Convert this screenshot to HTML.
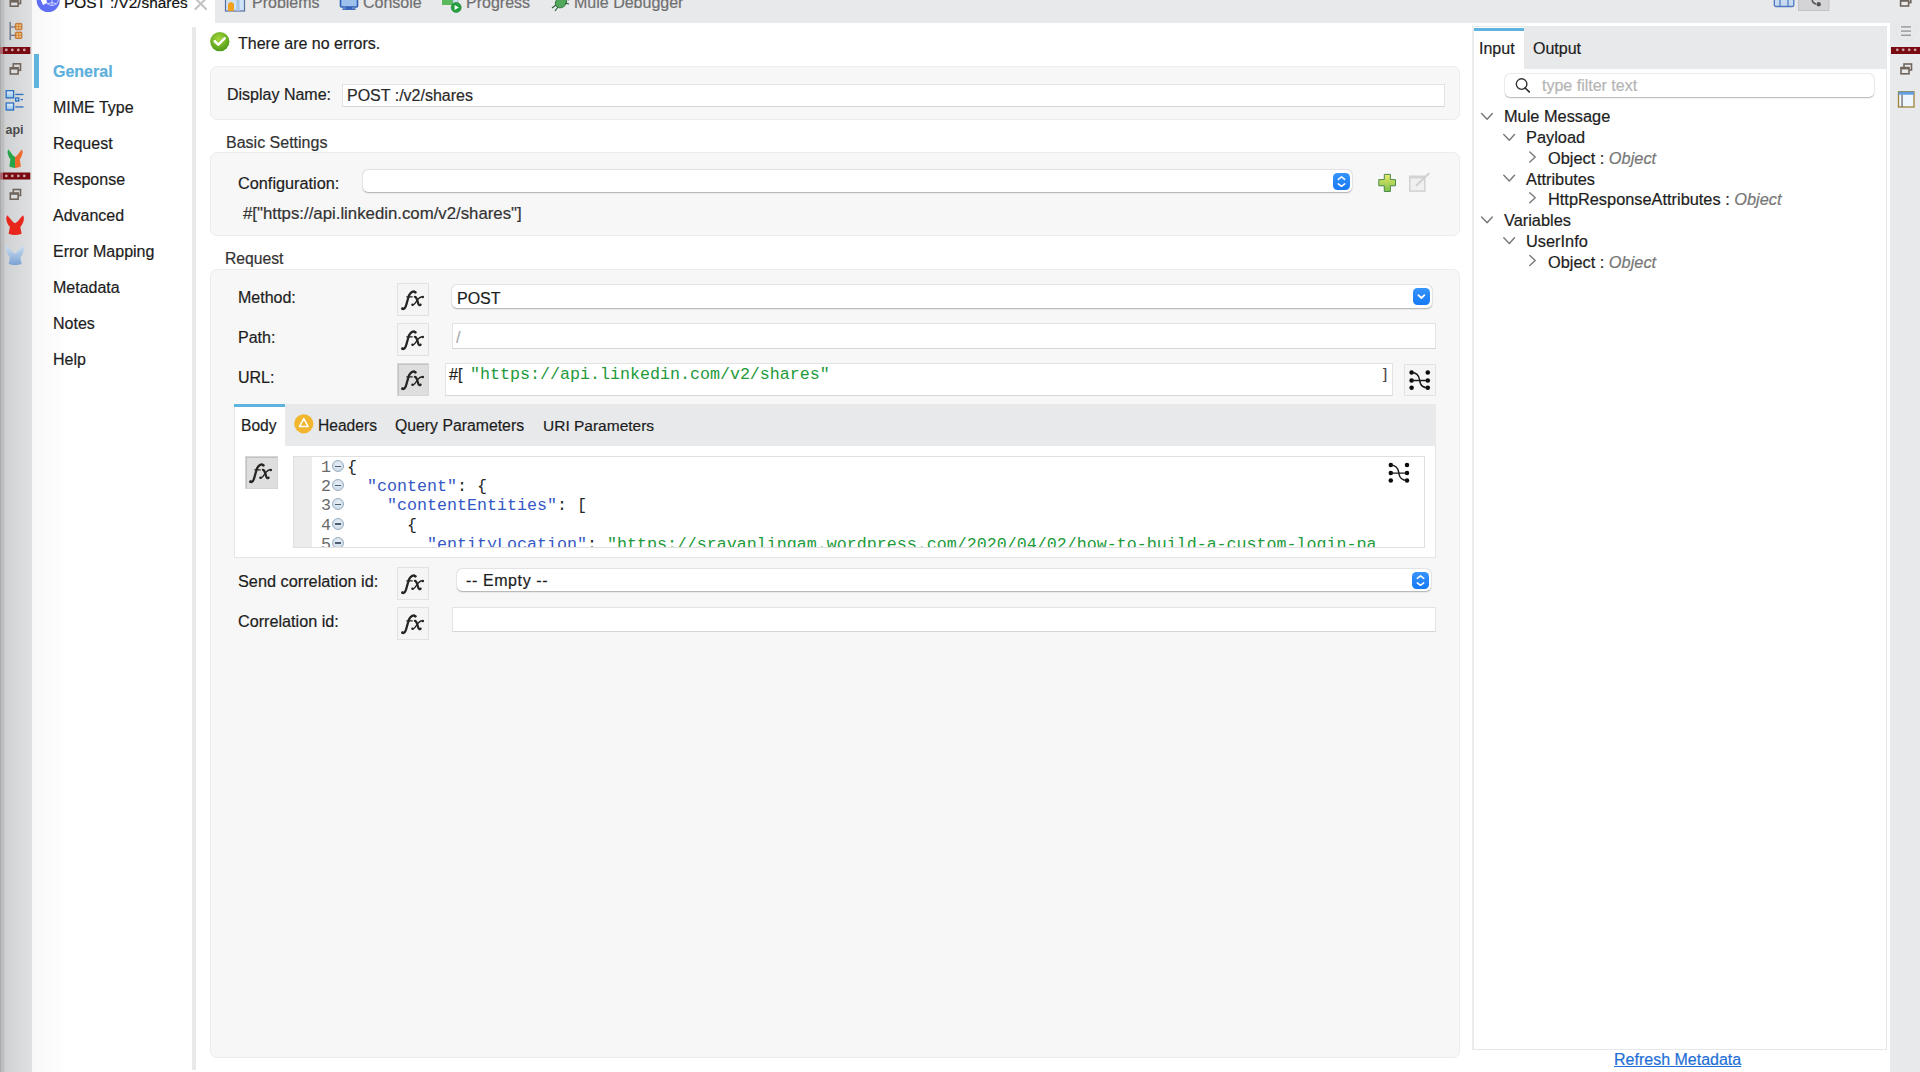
<!DOCTYPE html>
<html><head><meta charset="utf-8">
<style>
*{box-sizing:border-box}
html,body{margin:0;padding:0;width:1920px;height:1072px;overflow:hidden;background:#fff;font-family:"Liberation Sans",sans-serif;color:#1d1d1d}
.a{position:absolute}
.t{position:absolute;white-space:pre;font-size:16px;line-height:20px;-webkit-text-stroke:0.2px currentColor}
.m{font-family:"Liberation Mono",monospace;font-size:16.67px;-webkit-text-stroke:0}
.panel{position:absolute;background:#f7f7f7;border:1px solid #ececec;border-radius:7px}
.fx{position:absolute;width:32px;height:32.5px;border:1px solid #e2e2e2;background:#f5f5f5}
.fx.p{background:#dedede;border-color:#d6d6d6;box-shadow:inset 1px 1px 0 #c2c2c2}
.inp{position:absolute;background:#fff;border:1px solid #e3e3e3;border-bottom-color:#d6d6d6}
.sel{position:absolute;background:#fff;border-radius:5px;box-shadow:0 0.5px 1.5px rgba(0,0,0,0.28),0 0 0 0.5px rgba(0,0,0,0.06)}
.fold{display:inline-block;width:12px;height:12px;border-radius:50%;background:radial-gradient(circle at 50% 40%,#e8f0f7,#c5d5e3);border:1px solid #9aaec2;vertical-align:0px;margin:0 3px 0 1px;position:relative}
.fold:after{content:"";position:absolute;left:2px;top:4.5px;width:6px;height:1.4px;background:#4d5d72}
.step{position:absolute;width:17px;height:17px;border-radius:4.5px;background:linear-gradient(#3794fb,#1679f5)}
.step svg{position:absolute;left:0;top:0}
</style></head><body>
<svg width="0" height="0" style="position:absolute"><defs>
<g id="fxg" fill="#262422" stroke="#262422" stroke-linecap="round">
 <path d="M20.2 9.3 C17 9.4 15.2 12 14.2 16 L12.2 23 C11.4 26 10.2 27.4 8.6 26.9" fill="none" stroke-width="2.3"/>
 <circle cx="21.3" cy="10.3" r="1.35" stroke="none"/>
 <circle cx="8.6" cy="26.7" r="1.4" stroke="none"/>
 <path d="M12.9 14.9 H18.2" stroke-width="1.4"/>
 <path d="M20.9 14.8 C22.3 14.9 22.7 16.5 23.3 18.4 L24.2 21.4 C24.8 23.2 25.6 23.6 26.6 22.6" fill="none" stroke-width="2.2"/>
 <path d="M28.6 14.8 C26.5 14.6 24.6 16.4 22.8 18.8 L21 21.4 C20.2 22.6 19.4 23 18.3 22.9" fill="none" stroke-width="1.35"/>
 <circle cx="28.8" cy="15" r="1.25" stroke="none"/>
 <circle cx="18.6" cy="22.7" r="1.3" stroke="none"/>
</g>
<g id="mapg" fill="#0a0a0a">
 <circle cx="0" cy="0" r="2.25"/><circle cx="0" cy="8" r="2.25"/><circle cx="0" cy="15.3" r="2.25"/>
 <circle cx="16.2" cy="0" r="2.25"/><circle cx="16.2" cy="8" r="2.25"/><circle cx="16.2" cy="15.3" r="2.25"/>
 <path d="M0 0 C5 0.2 7.2 2.5 7.9 7 L8.2 9 C9 13 11 15.3 16.2 15.3 M0 8 H16.2" fill="none" stroke="#1a1a1a" stroke-width="1.45"/>
</g>
</defs></svg>

<!-- left strip -->
<div class="a" style="left:0;top:0;width:32px;height:1072px;background:linear-gradient(90deg,#a8a8a9 0,#a9a9aa 1px,#bcbdbf 1.5px,#bdbec0 3.5px,#c9cacc 4.5px,#d0d1d3 6px,#d5d6d8 14px,#dcdddf 26px,#dfe0e2 32px)"></div>

<!-- top tab bar -->
<div class="a" style="left:215px;top:0;width:1705px;height:23px;background:#e8e9eb"></div>
<!-- left nav bg gradient -->
<div class="a" style="left:32px;top:0;width:36px;height:1072px;background:linear-gradient(90deg,#f8f8f9,#fff)"></div>

<!-- right strip -->
<div class="a" style="left:1890px;top:23px;width:30px;height:1049px;background:#e8e9eb"></div>

<!-- separator -->
<div class="a" style="left:192px;top:27px;width:4px;height:1043px;background:#e8e9eb"></div>

<!-- active nav indicator -->
<div class="a" style="left:34px;top:54px;width:5px;height:34px;background:#60b3dd"></div>

<!-- left nav -->
<div class="t" style="left:53px;top:62px;color:#5cb0dc;font-weight:bold;font-size:16px">General</div>
<div class="t" style="left:53px;top:98px">MIME Type</div>
<div class="t" style="left:53px;top:134px">Request</div>
<div class="t" style="left:53px;top:170px">Response</div>
<div class="t" style="left:53px;top:206px">Advanced</div>
<div class="t" style="left:53px;top:242px">Error Mapping</div>
<div class="t" style="left:53px;top:278px">Metadata</div>
<div class="t" style="left:53px;top:314px">Notes</div>
<div class="t" style="left:53px;top:350px">Help</div>


<!-- left strip icons -->
<svg class="a" style="left:0;top:0" width="32" height="280" viewBox="0 0 32 280">
 <g fill="none" stroke="#6f655c" stroke-width="1.6">
  <rect x="13.3" y="-3" width="7.2" height="6.5"/><rect x="10.3" y="0.8" width="7.8" height="5.4" fill="#dcdde0"/>
  <rect x="13.3" y="63.8" width="7.2" height="6.5"/><rect x="10.3" y="67.8" width="7.8" height="6.2" fill="#dcdde0"/>
  <rect x="13.3" y="189.5" width="7.2" height="6" /><rect x="10.3" y="193" width="7.8" height="6.2" fill="#dcdde0"/>
 </g>
 <g fill="#6f655c"><rect x="10.3" y="0.8" width="7.8" height="1.8"/><rect x="10.3" y="67.8" width="7.8" height="1.8"/><rect x="10.3" y="193" width="7.8" height="1.8"/></g>
 <!-- hierarchy -->
 <g fill="#6b7385"><rect x="9.5" y="22" width="1.4" height="18"/><rect x="10.9" y="26.3" width="4.3" height="1.3"/><rect x="10.9" y="34.7" width="4.3" height="1.3"/></g>
 <g fill="#d68a3a" stroke="#b8672a" stroke-width="0.8"><rect x="15.4" y="23.4" width="6.5" height="6.4" rx="0.8"/><rect x="15.4" y="32.1" width="6.5" height="6.4" rx="0.8"/></g>
 <g fill="#f0c890"><rect x="16.5" y="24.5" width="1.6" height="1.6"/><rect x="19.3" y="24.5" width="1.6" height="1.6"/><rect x="16.5" y="27.2" width="1.6" height="1.6"/><rect x="19.3" y="27.2" width="1.6" height="1.6"/>
 <rect x="16.5" y="33.2" width="1.6" height="1.6"/><rect x="19.3" y="33.2" width="1.6" height="1.6"/><rect x="16.5" y="35.9" width="1.6" height="1.6"/><rect x="19.3" y="35.9" width="1.6" height="1.6"/></g>
 <!-- red bars -->
 <rect x="0" y="47" width="3" height="7" fill="#a86a70"/><rect x="3" y="47" width="27.3" height="7" fill="#7a0a12"/>
 <g fill="#c9a3a3"><circle cx="6.3" cy="49.9" r="1.4"/><circle cx="12.3" cy="49.9" r="1.4"/><circle cx="18.3" cy="49.9" r="1.4"/><circle cx="24.3" cy="49.9" r="1.4"/></g>
 <rect x="0" y="172.5" width="3" height="7" fill="#a86a70"/><rect x="3" y="172.5" width="27.3" height="7" fill="#7a0a12"/>
 <g fill="#c9a3a3"><circle cx="6.3" cy="175.9" r="1.4"/><circle cx="12.3" cy="175.9" r="1.4"/><circle cx="18.3" cy="175.9" r="1.4"/><circle cx="24.3" cy="175.9" r="1.4"/></g>
 <!-- blue layout icon -->
 <defs><linearGradient id="bl" x1="0" y1="0" x2="0" y2="1"><stop offset="0" stop-color="#e8f2fb"/><stop offset="1" stop-color="#8fbde8"/></linearGradient>
 <linearGradient id="gm" x1="0" y1="0" x2="1" y2="0"><stop offset="0.5" stop-color="#27a548"/><stop offset="0.5" stop-color="#ee6a2a"/></linearGradient>
 <linearGradient id="bm" x1="0" y1="0" x2="0" y2="1"><stop offset="0" stop-color="#cddff2"/><stop offset="1" stop-color="#79a1d2"/></linearGradient></defs>
 <g stroke="#2a6fc0" stroke-width="1.3" fill="url(#bl)"><rect x="6.2" y="90.7" width="7.4" height="7.2"/><rect x="6.2" y="103" width="7.4" height="7"/><rect x="15.6" y="98" width="3.2" height="3"/></g>
 <g fill="#2a6fc0"><rect x="15.3" y="93.8" width="8.2" height="1.3"/><rect x="15.3" y="106.3" width="8.2" height="1.3"/><rect x="20.6" y="99" width="2.4" height="1.2"/></g>
 <text x="5.5" y="134" font-family="Liberation Sans" font-size="12.5" font-weight="bold" fill="#4c4c4c">api</text>
 <!-- mule icons -->
 <path d="M8.40 149.60 C6.80 151.50 7.50 154.92 10.40 159.60 L9.30 166.60 Q15.10 169.20 20.90 166.60 L19.80 159.60 C22.70 154.92 23.40 151.50 21.80 149.60 C19.50 152.00 17.50 156.00 15.10 157.00 C12.70 156.00 10.70 152.00 8.40 149.60 Z" fill="url(#gm)"/>
 <path d="M7.20 215.20 C5.60 217.60 5.90 221.92 9.90 227.10 L8.60 233.70 Q15.10 236.10 21.60 233.70 L20.30 227.10 C24.30 221.92 24.60 217.60 23.00 215.20 C20.70 217.60 17.50 222.20 15.10 223.20 C12.70 222.20 9.50 217.60 7.20 215.20 Z" fill="#e8261c"/>
 <path d="M7.20 245.60 C5.60 248.00 5.90 252.32 9.90 257.50 L8.60 264.10 Q15.10 266.20 21.60 264.10 L20.30 257.50 C24.30 252.32 24.60 248.00 23.00 245.60 C20.70 248.00 17.50 252.60 15.10 253.60 C12.70 252.60 9.50 248.00 7.20 245.60 Z" fill="url(#bm)"/>
</svg>

<!-- top tab icons -->
<svg class="a" style="left:32px;top:0" width="700" height="23" viewBox="32 0 700 23">
 <circle cx="48.2" cy="0.6" r="11.5" fill="#5f6ff3"/>
 <g stroke="#c8d0ff" stroke-width="1" fill="none"><circle cx="52" cy="-1" r="6.5"/><path d="M45.5 -1 H58.5 M52 -7.5 V5.5 M47 4 Q52 1 57 4"/></g>
 <path d="M40 -2 L46 -2 L47 3 L43 5 Z" fill="#fff"/>
 <g stroke="#c4c4c4" stroke-width="2.2" stroke-linecap="round"><path d="M195.5 -1.5 L206 9 M206 -1.5 L195.5 9"/></g>
 <!-- problems -->
 <rect x="225.5" y="-2" width="19" height="13" fill="#cfe3f6" stroke="#5770a0" stroke-width="1.2"/>
 <path d="M228 11 V4 Q231 0 234 4 V11 Z" fill="#f2a020"/>
 <rect x="236.5" y="-2" width="3" height="13" fill="#a8c4e6"/>
 <!-- console -->
 <rect x="340.5" y="-3" width="17" height="10" rx="1" fill="#9ec0ec" stroke="#2f5fb8" stroke-width="1.6"/>
 <rect x="346" y="7" width="6" height="1.8" fill="#2f5fb8"/><rect x="342.5" y="8.3" width="13" height="1.6" fill="#2f5fb8"/>
 <!-- progress -->
 <rect x="442" y="-3" width="11" height="8" fill="#5cb85c"/><rect x="453" y="-3" width="5" height="8" fill="#cfe2f3" stroke="#8aa" stroke-width="0.6"/>
 <circle cx="456.2" cy="7.5" r="5" fill="#25a040" stroke="#1d7a30" stroke-width="0.6"/><path d="M454.6 5 L458.8 7.5 L454.6 10 Z" fill="#fff"/>
 <!-- debugger bug -->
 <ellipse cx="561" cy="2.5" rx="6" ry="5" fill="#52a85a" stroke="#2e6e3a" stroke-width="0.8" transform="rotate(-35 561 2.5)"/>
 <path d="M552 8 L556 5 M555 11 L558 7 M566 -1 L569 0 M565 3 L569 4" stroke="#2e5f3a" stroke-width="1.2"/>
</svg>

<!-- check icon -->
<svg class="a" style="left:208px;top:30px" width="24" height="24" viewBox="0 0 24 24">
 <defs><radialGradient id="gc" cx="0.45" cy="0.35" r="0.65"><stop offset="0" stop-color="#a6d83a"/><stop offset="1" stop-color="#4f9a1a"/></radialGradient></defs>
 <circle cx="11.8" cy="11.6" r="9.6" fill="url(#gc)"/>
 <path d="M6.8 11.2 L10.3 14.6 L16.6 8.3" fill="none" stroke="#fff" stroke-width="2.6" stroke-linecap="round" stroke-linejoin="round"/>
</svg>

<!-- top right icons -->
<svg class="a" style="left:1760px;top:0" width="160" height="23" viewBox="1760 0 160 23">
 <rect x="1774.3" y="-3" width="19.5" height="9.5" rx="1.5" fill="#c7daf0" stroke="#4d78c0" stroke-width="1.3"/>
 <path d="M1780 -3 V6.5 M1788 -3 V6.5" stroke="#4d78c0" stroke-width="1.2"/>
 <rect x="1798.5" y="-2" width="30.5" height="12.5" fill="#d4d4d6" stroke="#bcbcbe" stroke-width="0.8"/>
 <path d="M1812 -2 Q1812 3.5 1816 4" fill="none" stroke="#555" stroke-width="1.5"/><circle cx="1818.7" cy="4.2" r="2.2" fill="#555"/>
 <g fill="none" stroke="#6f655c" stroke-width="1.6"><rect x="1903.3" y="-3" width="7.5" height="5.6"/><rect x="1900.6" y="0" width="8" height="6" fill="#e8e9eb"/></g>
 <rect x="1900.6" y="0" width="8" height="1.8" fill="#6f655c"/>
</svg>

<!-- right strip icons -->
<svg class="a" style="left:1890px;top:23px" width="30" height="90" viewBox="1890 23 30 90">
 <circle cx="1906" cy="31" r="10" fill="none" stroke="#e2e3e5" stroke-width="0.8"/>
 <g fill="#8a8a8a"><rect x="1901" y="26.3" width="10" height="1.2"/><rect x="1901" y="30.5" width="10" height="1.2"/><rect x="1901" y="34.6" width="10" height="1.2"/></g>
 <rect x="1891" y="47" width="29" height="7" fill="#7a0a12"/>
 <g fill="#c9a3a3"><circle cx="1897.3" cy="49.8" r="1.4"/><circle cx="1903.2" cy="49.8" r="1.4"/><circle cx="1909.2" cy="49.8" r="1.4"/><circle cx="1915.1" cy="49.8" r="1.4"/></g>
 <g fill="none" stroke="#6f655c" stroke-width="1.6"><rect x="1904" y="64" width="7.5" height="6"/><rect x="1901" y="67.6" width="8" height="6.2" fill="#e8e9eb"/></g>
 <rect x="1901" y="67.6" width="8" height="1.8" fill="#6f655c"/>
 <rect x="1898.5" y="91.7" width="15.5" height="15.3" fill="#eef6fd" stroke="#a0823a" stroke-width="1.3"/>
 <rect x="1898.5" y="91.7" width="15.5" height="3" fill="#5d9de0"/>
 <rect x="1901.4" y="94.7" width="1.3" height="12.3" fill="#6c6c6c"/>
</svg>

<!-- top tabs text -->
<div class="t" style="left:64px;top:-7px;color:#111;font-size:15.4px">POST :/V2/shares</div>
<div class="t" style="left:252px;top:-7px;color:#707070">Problems</div>
<div class="t" style="left:363px;top:-7px;color:#707070">Console</div>
<div class="t" style="left:466px;top:-7px;color:#707070">Progress</div>
<div class="t" style="left:574px;top:-7px;color:#707070">Mule Debugger</div>

<!-- status -->
<div class="t" style="left:238px;top:34px">There are no errors.</div>

<!-- panel 1 -->
<div class="panel" style="left:210px;top:66px;width:1250px;height:54px"></div>
<div class="t" style="left:227px;top:85px;color:#222">Display Name:</div>
<div class="inp" style="left:342px;top:84px;width:1103px;height:23px"></div>
<div class="t" style="left:347px;top:86px;color:#2a2a2a">POST :/v2/shares</div>

<div class="t" style="left:226px;top:133px;color:#333">Basic Settings</div>
<div class="panel" style="left:210px;top:152px;width:1250px;height:84px"></div>
<div class="t" style="left:238px;top:173px;font-size:16.3px">Configuration:</div>
<div class="sel" style="left:363px;top:170px;width:989px;height:22px"></div>
<div class="step" style="left:1333px;top:172.5px"><svg width="17" height="17" viewBox="0 0 17 17"><path d="M5.3 6.3 L8.5 3.9 L11.7 6.3 M5.3 10.9 L8.5 13.3 L11.7 10.9" fill="none" stroke="#fff" stroke-width="1.6" stroke-linecap="round" stroke-linejoin="round"/></svg></div>
<svg class="a" style="left:1376px;top:172px" width="56" height="22" viewBox="1376 172 56 22">
 <defs><linearGradient id="pl" x1="0" y1="0" x2="0" y2="1"><stop offset="0" stop-color="#ecea6e"/><stop offset="1" stop-color="#7cc146"/></linearGradient></defs>
 <path d="M1384.3 174.4 H1390.4 V179.6 H1395.5 V185.8 H1390.4 V191.5 H1384.3 V185.8 H1378.8 V179.6 H1384.3 Z" fill="url(#pl)" stroke="#4a8a4a" stroke-width="1"/>
 <rect x="1409.8" y="176.3" width="15" height="14.8" fill="#f0f0f0" stroke="#d3d3d3" stroke-width="1.6"/>
 <rect x="1409.8" y="176.3" width="15" height="2.2" fill="#d3d3d3"/>
 <path d="M1416.5 185.3 L1428.8 173.6" stroke="#d0d0d0" stroke-width="2" stroke-linecap="round"/>
</svg>
<div class="t" style="left:243px;top:204px;color:#333;font-size:16.8px">#["https://api.linkedin.com/v2/shares"]</div>

<div class="t" style="left:225px;top:249px;color:#333;font-size:15.7px">Request</div>
<div class="panel" style="left:210px;top:269px;width:1250px;height:789px"></div>

<div class="t" style="left:238px;top:288px">Method:</div>
<div class="t" style="left:238px;top:328px">Path:</div>
<div class="t" style="left:238px;top:368px">URL:</div>
<div class="fx" style="left:397px;top:283px"><svg width="38" height="37" viewBox="0 0 38 37" style="position:absolute;left:-4px;top:-2.4px"><use href="#fxg"/></svg></div>
<div class="fx" style="left:397px;top:323px"><svg width="38" height="37" viewBox="0 0 38 37" style="position:absolute;left:-4px;top:-2.4px"><use href="#fxg"/></svg></div>
<div class="fx p" style="left:397px;top:363px"><svg width="38" height="37" viewBox="0 0 38 37" style="position:absolute;left:-4px;top:-2.4px"><use href="#fxg"/></svg></div>

<div class="sel" style="left:452px;top:284.5px;width:980px;height:23.5px"></div>
<div class="step" style="left:1413px;top:288px"><svg width="17" height="17" viewBox="0 0 17 17"><path d="M5.4 7.2 L8.4 10 L11.4 7.2" fill="none" stroke="#fff" stroke-width="1.8" stroke-linecap="round" stroke-linejoin="round"/></svg></div>
<div class="t" style="left:457px;top:289px">POST</div>
<div class="inp" style="left:452px;top:323px;width:984px;height:26px"></div>
<div class="t" style="left:456px;top:328px;color:#aaa">/</div>
<div class="inp" style="left:445px;top:363px;width:948px;height:33px"></div>
<div class="t" style="left:449px;top:365px">#[</div>
<div class="t m" style="left:470px;top:365px;color:#229a3a">"https://api.linkedin.com/v2/shares"</div>
<div class="t" style="left:1383px;top:364px;font-size:15px;color:#444">]</div>
<div class="fx" style="left:1404px;top:364px;width:32px;height:32px"><svg width="32" height="32" viewBox="1405 365 32 32" style="position:absolute;left:0;top:0"><use href="#mapg" transform="translate(1411.6 372.5)"/></svg></div>

<!-- tabs -->
<div class="a" style="left:234px;top:404px;width:1202px;height:154px;background:#fff;border:1px solid #e6e6e6;border-top:0"></div>
<div class="a" style="left:285px;top:404px;width:1151px;height:42px;background:#e8e9eb"></div>
<div class="a" style="left:234px;top:404px;width:51px;height:3px;background:#5eb3df"></div>
<div class="t" style="left:241px;top:416px;font-size:15.6px">Body</div>
<svg class="a" style="left:294px;top:414px" width="20" height="20" viewBox="0 0 20 20"><circle cx="9.8" cy="9.8" r="9.6" fill="#f1b52e"/><path d="M9.8 4.6 L14.2 12.6 H5.4 Z" fill="none" stroke="#fff" stroke-width="1.5" stroke-linejoin="round"/></svg>
<div class="t" style="left:318px;top:416px;font-size:15.6px">Headers</div>
<div class="t" style="left:395px;top:416px;font-size:15.8px">Query Parameters</div>
<div class="t" style="left:543px;top:416px;font-size:15.5px">URI Parameters</div>

<div class="fx p" style="left:245px;top:456px;width:33px"><svg width="38" height="37" viewBox="0 0 38 37" style="position:absolute;left:-4px;top:-2.4px"><use href="#fxg"/></svg></div>
<div class="inp" style="left:293px;top:456px;width:1132px;height:92px;border-color:#e0e0e0;overflow:hidden">
  <div class="a" style="left:0;top:0;width:18px;height:92px;background:#ececec"></div>
  <div class="a" style="left:27px;top:0;width:1100px;font-family:'Liberation Mono',monospace;font-size:16.67px;line-height:19.2px;white-space:pre;color:#262626;padding-top:1px"><div><span style="color:#6a6a6a">1</span><span class="fold"></span>{</div><div><span style="color:#6a6a6a">2</span><span class="fold"></span>  <span style="color:#3558c4">"content"</span>: {</div><div><span style="color:#6a6a6a">3</span><span class="fold"></span>    <span style="color:#3558c4">"contentEntities"</span>: [</div><div><span style="color:#6a6a6a">4</span><span class="fold"></span>      {</div><div><span style="color:#6a6a6a">5</span><span class="fold"></span>        <span style="color:#3558c4">"entityLocation"</span>: <span style="color:#229a3a">"https://sravanlingam.wordpress.com/2020/04/02/how-to-build-a-custom-login-pa</span></div></div>
</div>
<svg class="a" style="left:1380px;top:455px" width="40" height="35" viewBox="1380 455 40 35"><use href="#mapg" transform="translate(1390.8 465.1)"/></svg>

<div class="t" style="left:238px;top:571px;font-size:16.3px">Send correlation id:</div>
<div class="t" style="left:238px;top:611px;font-size:16.2px">Correlation id:</div>
<div class="fx" style="left:397px;top:567px"><svg width="38" height="37" viewBox="0 0 38 37" style="position:absolute;left:-4px;top:-2.4px"><use href="#fxg"/></svg></div>
<div class="fx" style="left:397px;top:607px"><svg width="38" height="37" viewBox="0 0 38 37" style="position:absolute;left:-4px;top:-2.4px"><use href="#fxg"/></svg></div>
<div class="sel" style="left:457px;top:569px;width:974px;height:22px"></div>
<div class="t" style="left:466px;top:571px;letter-spacing:0.6px">-- Empty --</div>
<div class="step" style="left:1411.5px;top:571.5px"><svg width="17" height="17" viewBox="0 0 17 17"><path d="M5.3 6.3 L8.5 3.9 L11.7 6.3 M5.3 10.9 L8.5 13.3 L11.7 10.9" fill="none" stroke="#fff" stroke-width="1.6" stroke-linecap="round" stroke-linejoin="round"/></svg></div>
<div class="inp" style="left:452px;top:607px;width:984px;height:25px"></div>

<!-- right panel -->
<div class="a" style="left:1472px;top:26px;width:415px;height:1024px;background:#fff;border:1px solid #e6e7e9;border-left:2px solid #ebecee"></div>
<div class="a" style="left:1524px;top:26px;width:362px;height:43px;background:#e8e9eb"></div>
<div class="a" style="left:1474px;top:28px;width:50px;height:3px;background:#5eb3df"></div>
<div class="t" style="left:1479px;top:39px">Input</div>
<div class="t" style="left:1533px;top:39px">Output</div>
<div class="sel" style="left:1505px;top:74px;width:369px;height:23px"></div>
<div class="t" style="left:1542px;top:76px;color:#b5b5b5">type filter text</div>
<svg class="a" style="left:1512px;top:76px" width="22" height="20" viewBox="1512 76 22 20"><circle cx="1521.6" cy="84.1" r="5.3" fill="none" stroke="#2e2e2e" stroke-width="1.35"/><path d="M1525.1 88 L1529.3 91.9" stroke="#2e2e2e" stroke-width="1.7" stroke-linecap="round"/></svg>

<svg class="a" style="left:1476px;top:104px" width="70" height="170" viewBox="1476 104 70 170"><g fill="none" stroke="#7a7a7a" stroke-width="1.45" stroke-linecap="round" stroke-linejoin="round">
 <path d="M1481.6 113.5 L1487.1 119.3 L1492.3 113.5"/>
 <path d="M1503.8 134.4 L1509.3 140.2 L1514.5 134.4"/>
 <path d="M1529.8 152 L1535.2 157 L1529.8 162"/>
 <path d="M1503.8 175.2 L1509.3 181 L1514.5 175.2"/>
 <path d="M1529.8 192.7 L1535.2 197.7 L1529.8 202.7"/>
 <path d="M1481.6 217 L1487.1 222.8 L1492.3 217"/>
 <path d="M1503.8 237.8 L1509.3 243.6 L1514.5 237.8"/>
 <path d="M1529.8 255.5 L1535.2 260.5 L1529.8 265.5"/>
</g></svg>
<div class="t" style="left:1504px;top:106px;font-size:16.35px">Mule Message</div>
<div class="t" style="left:1526px;top:127px;font-size:16.35px">Payload</div>
<div class="t" style="left:1548px;top:148px;font-size:16.35px">Object : <i style="color:#777">Object</i></div>
<div class="t" style="left:1526px;top:169px;font-size:16.35px">Attributes</div>
<div class="t" style="left:1548px;top:189px;font-size:16.35px">HttpResponseAttributes : <i style="color:#777">Object</i></div>
<div class="t" style="left:1504px;top:210px;font-size:16.35px">Variables</div>
<div class="t" style="left:1526px;top:231px;font-size:16.35px">UserInfo</div>
<div class="t" style="left:1548px;top:252px;font-size:16.35px">Object : <i style="color:#777">Object</i></div>

<div class="t" style="left:1614px;top:1050px;color:#1f6fd6;text-decoration:underline">Refresh Metadata</div>

</body></html>
